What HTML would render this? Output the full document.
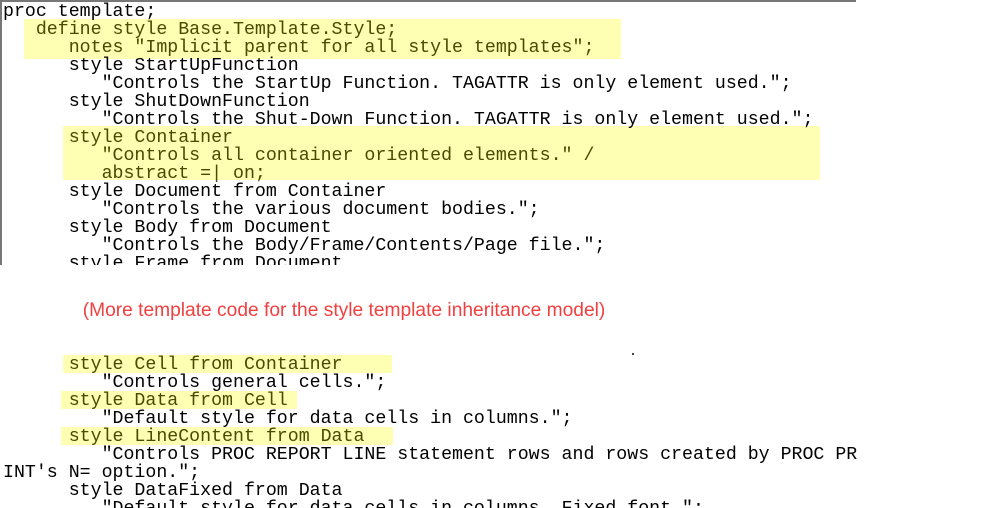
<!DOCTYPE html>
<html><head><meta charset="utf-8"><style>
html,body{margin:0;padding:0;background:#fff;width:988px;height:508px;overflow:hidden;position:relative}
.t{position:absolute;left:3px;font-family:"Liberation Mono",monospace;font-size:18.25px;line-height:18px;white-space:pre;color:#000}
.hl{position:absolute;background:#ffffb3}
.o{color:#4a4a00}
#frame{position:absolute;left:0;top:0;width:856px;height:265px;border-top:2px solid #777;border-left:2px solid #777;overflow:hidden;box-sizing:border-box}
</style></head><body>
<div class="hl" style="left:24px;top:19px;width:597px;height:40px"></div>
<div class="hl" style="left:63px;top:126px;width:757px;height:54px"></div>
<div id="frame"></div>
<div style="position:absolute;left:0;top:0;width:856px;height:265px;overflow:hidden">
<div class="t" style="top:3px">proc template;
<span class="o">   define style Base.Template.Style;
      notes "Implicit parent for all style templates";</span>
      style StartUpFunction
         "Controls the StartUp Function. TAGATTR is only element used.";
      style ShutDownFunction
         "Controls the Shut-Down Function. TAGATTR is only element used.";
<span class="o">      style Container
         "Controls all container oriented elements." /
         abstract =| on;</span>
      style Document from Container
         "Controls the various document bodies.";
      style Body from Document
         "Controls the Body/Frame/Contents/Page file.";
      style Frame from Document</div>
</div>
<div style="position:absolute;left:0;top:300px;width:688px;text-align:center;font-family:'Liberation Sans',sans-serif;font-size:19.2px;color:#f04040">(More template code for the style template inheritance model)</div>
<div style="position:absolute;left:632px;top:353px;width:2px;height:2px;background:#444"></div>
<div class="hl" style="left:63px;top:355px;width:329px;height:18px"></div>
<div class="hl" style="left:61px;top:391px;width:236px;height:18px"></div>
<div class="hl" style="left:61px;top:427px;width:332px;height:18px"></div>
<div class="t" style="top:356px"><span class="o">      style Cell from Container</span>
         "Controls general cells.";
<span class="o">      style Data from Cell</span>
         "Default style for data cells in columns.";
<span class="o">      style LineContent from Data</span>
         "Controls PROC REPORT LINE statement rows and rows created by PROC PR
INT's N= option.";
      style DataFixed from Data
         "Default style for data cells in columns. Fixed font.";</div>
</body></html>
